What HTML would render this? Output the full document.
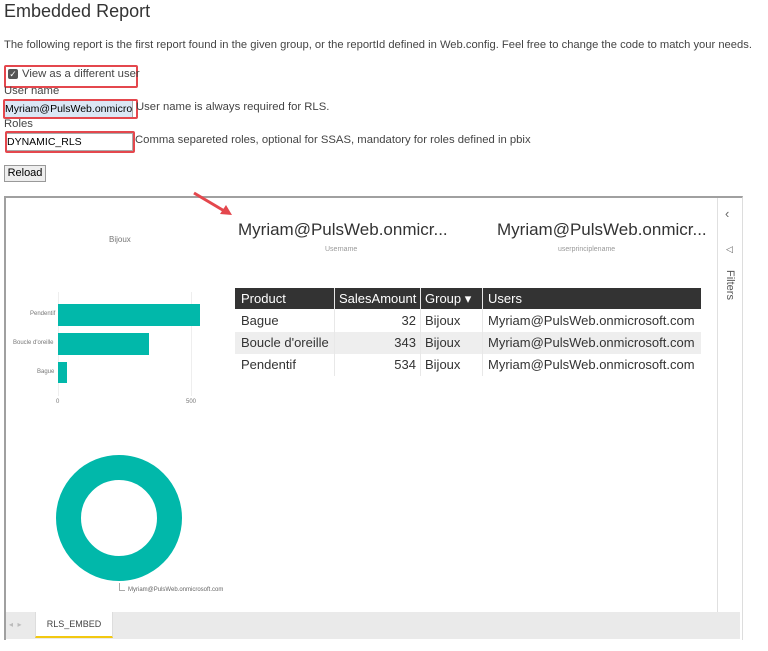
<!DOCTYPE html>
<html><head><style>
body{margin:0;width:768px;height:651px;background:#fff;font-family:"Liberation Sans",sans-serif;color:#333;position:relative;overflow:hidden}
.a{position:absolute;white-space:nowrap}
.red{position:absolute;border:2px solid #e4474d;border-radius:2px}
</style></head><body>
<div class="a" style="left:4px;top:1px;font-size:18px;color:#333">Embedded Report</div>
<div class="a" style="left:4px;top:39px;font-size:11.2px;color:#444">The following report is the first report found in the given group, or the reportId defined in Web.config. Feel free to change the code to match your needs.</div>
<div class="red" style="left:4px;top:65px;width:130px;height:19px"></div>
<div class="a" style="left:8px;top:69px;width:10px;height:10px;background:#555;border-radius:2px;color:#fff;font-size:9px;line-height:10px;text-align:center">✓</div>
<div class="a" style="left:22px;top:68px;font-size:11.3px;color:#444">View as a different user</div>
<div class="a" style="left:4px;top:85px;font-size:11.3px;color:#444">User name</div>
<div class="a" style="left:4px;top:100px;width:127px;height:16px;border:1px solid #aaa;background:#dbe7f5;font-size:10.5px;line-height:16px;overflow:hidden;color:#000">Myriam@PulsWeb.onmicros</div>
<div class="red" style="left:3px;top:99px;width:131px;height:16px"></div>
<div class="a" style="left:136px;top:101px;font-size:11.3px;color:#444">User name is always required for RLS.</div>
<div class="a" style="left:4px;top:118px;font-size:11.3px;color:#444">Roles</div>
<div class="a" style="left:6px;top:133px;width:125px;height:16px;border:1px solid #aaa;font-size:10.5px;line-height:16px;color:#000">DYNAMIC_RLS</div>
<div class="red" style="left:5px;top:131px;width:126px;height:18px"></div>
<div class="a" style="left:135px;top:134px;font-size:11.3px;color:#444">Comma separeted roles, optional for SSAS, mandatory for roles defined in pbix</div>
<div class="a" style="left:4px;top:165px;width:40px;height:15px;border:1px solid #999;background:#eee;font-size:11px;line-height:15px;text-align:center;color:#000">Reload</div>

<div class="a" style="left:4px;top:196px;width:736px;height:442px;border:2px solid #a0a0a0;border-bottom:none;border-right:1px solid #ddd"></div>
<div class="a" style="left:717px;top:198px;width:1px;height:414px;background:#e0e0e0"></div>
<div class="a" style="left:725px;top:206px;font-size:13px;color:#666">‹</div>
<div class="a" style="left:726px;top:244px;font-size:9px;color:#666">◁</div>
<div class="a" style="top:270px;font-size:11px;color:#555;transform:rotate(90deg);transform-origin:left top;left:736px">Filters</div>

<svg class="a" style="left:190px;top:190px" width="50" height="30"><line x1="4" y1="3" x2="36" y2="22" stroke="#e4474d" stroke-width="3"/><polygon points="42,25 30,24 36,15" fill="#e4474d"/></svg>

<div class="a" style="left:109px;top:235px;font-size:8px;color:#777">Bijoux</div>
<div class="a" style="left:58px;top:292px;width:1px;height:104px;background:#eee"></div>
<div class="a" style="left:191px;top:292px;width:1px;height:104px;background:#eee"></div>
<div class="a" style="left:58px;top:304px;width:142px;height:22px;background:#01b8aa"></div>
<div class="a" style="left:58px;top:333px;width:91px;height:22px;background:#01b8aa"></div>
<div class="a" style="left:58px;top:362px;width:9px;height:21px;background:#01b8aa"></div>
<div class="a" style="left:30px;top:311px;font-size:6px;color:#777">Pendentif</div>
<div class="a" style="left:13px;top:340px;font-size:6px;color:#777">Boucle d'oreille</div>
<div class="a" style="left:37px;top:369px;font-size:6px;color:#777">Bague</div>
<div class="a" style="left:56px;top:399px;font-size:6px;color:#777">0</div>
<div class="a" style="left:186px;top:399px;font-size:6px;color:#777">500</div>

<div class="a" style="left:56px;top:455px;width:76px;height:76px;border:25px solid #01b8aa;border-radius:50%"></div>
<div class="a" style="left:119px;top:583px;width:5px;height:7px;border-left:1px solid #aaa;border-bottom:1px solid #aaa"></div>
<div class="a" style="left:128px;top:587px;font-size:6px;color:#666">Myriam@PulsWeb.onmicrosoft.com</div>

<div class="a" style="left:238px;top:220px;font-size:17px;color:#333">Myriam@PulsWeb.onmicr...</div>
<div class="a" style="left:325px;top:246px;font-size:7px;color:#999">Username</div>
<div class="a" style="left:497px;top:220px;font-size:17px;color:#333">Myriam@PulsWeb.onmicr...</div>
<div class="a" style="left:558px;top:246px;font-size:7px;color:#999">userprinciplename</div>

<div class="a" style="left:235px;top:288px;width:466px;height:21px;background:#333"></div>
<div class="a" style="left:235px;top:332px;width:466px;height:22px;background:#eee"></div>
<div class="a" style="left:334px;top:288px;width:1px;height:88px;background:#e8e8e8"></div>
<div class="a" style="left:420px;top:288px;width:1px;height:88px;background:#e8e8e8"></div>
<div class="a" style="left:482px;top:288px;width:1px;height:88px;background:#e8e8e8"></div>
<div class="a" style="left:241px;top:291px;font-size:13px;color:#fff">Product</div>
<div class="a" style="left:339px;top:291px;font-size:13px;color:#fff">SalesAmount</div>
<div class="a" style="left:425px;top:291px;font-size:13px;color:#fff">Group ▾</div>
<div class="a" style="left:488px;top:291px;font-size:13px;color:#fff">Users</div>
<div class="a" style="left:241px;top:313px;font-size:13px">Bague</div>
<div class="a" style="left:241px;top:335px;font-size:13px">Boucle d'oreille</div>
<div class="a" style="left:241px;top:357px;font-size:13px">Pendentif</div>
<div class="a" style="left:335px;top:313px;width:81px;text-align:right;font-size:13px">32</div>
<div class="a" style="left:335px;top:335px;width:81px;text-align:right;font-size:13px">343</div>
<div class="a" style="left:335px;top:357px;width:81px;text-align:right;font-size:13px">534</div>
<div class="a" style="left:425px;top:313px;font-size:13px">Bijoux</div>
<div class="a" style="left:425px;top:335px;font-size:13px">Bijoux</div>
<div class="a" style="left:425px;top:357px;font-size:13px">Bijoux</div>
<div class="a" style="left:488px;top:313px;font-size:13px">Myriam@PulsWeb.onmicrosoft.com</div>
<div class="a" style="left:488px;top:335px;font-size:13px">Myriam@PulsWeb.onmicrosoft.com</div>
<div class="a" style="left:488px;top:357px;font-size:13px">Myriam@PulsWeb.onmicrosoft.com</div>

<div class="a" style="left:6px;top:612px;width:734px;height:27px;background:#eaeaea"></div>
<div class="a" style="left:9px;top:620px;font-size:8px;color:#bbb">◂ &nbsp;▸</div>
<div class="a" style="left:35px;top:612px;width:76px;height:24px;background:#fff;border-left:1px solid #ddd;border-right:1px solid #ddd;border-bottom:2px solid #f2c811;font-size:9px;line-height:25px;text-align:center;color:#444">RLS_EMBED</div>
</body></html>
